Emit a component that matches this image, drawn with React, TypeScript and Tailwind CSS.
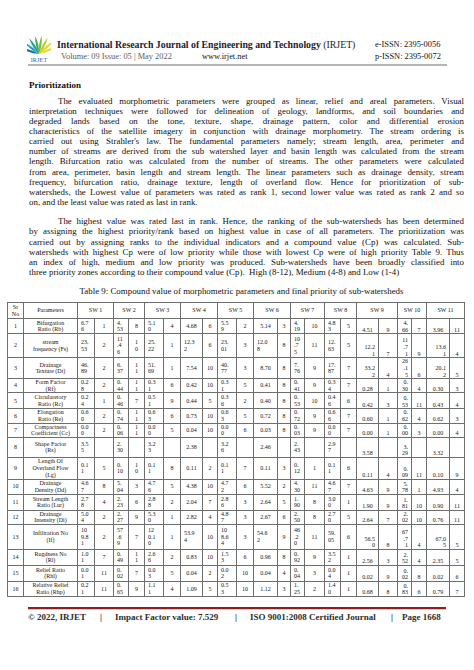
const para1 = [
  "The evaluated morphometric parameters were grouped as linear, relief and areal parameters. Visual",
  "interpretation techniques were followed for delineation of geology, landforms, and soil boundaries and",
  "degraded lands based on the tone, texture, shape, drainage pattern, color and differential erosion",
  "characteristics of the satellite imagery in conjunction with drainage morphometry. The stream ordering is",
  "carried out using Strahler's law. The fundamental parameters namely; stream length, area, perimeter and",
  "number of streams are derived from the sub watershed layer and basin length was calculated from the stream",
  "length. Bifurcation ratio was calculated from the number of streams. The other parameters were calculated",
  "from area, perimeter, basin length and stream length. The linear parameters such as drainage density, stream",
  "frequency, bifurcation ratio, drainage texture, length of overland flow. Hence for prioritization of sub-",
  "watersheds, the Lowest value of parameters was rated as rank 1, second lower value was rated as rank 2 and so",
  "on, and the least value was rated as last in rank.",
];

const para2 = [
  "The highest value was rated last in rank. Hence, the ranking of the sub-watersheds has been determined",
  "by assigning the highest priority/rank based on highest value in case of all parameters. The prioritization was",
  "carried out by assigning ranks to the individual indicators and a compound value (Cp) was calculated. Sub-",
  "watersheds with highest Cp were of low priority while those with lowest Cp were of high priority Table 9. Thus",
  "an index of high, medium and low priority was produced. Sub-watersheds have been broadly classified into",
  "three priority zones according to their compound value (Cp).\u00a0 High (8-12), Medium (4-8) and Low (1-4)",
];

const colWidths = [
  "w-[16px]", "w-[54px]",
  "w-[17px]", "w-[19px]",
  "w-[15px]", "w-[16px]",
  "w-[19px]", "w-[17px]",
  "w-[22px]", "w-[15px]",
  "w-[19px]", "w-[17px]",
  "w-[24px]", "w-[13px]",
  "w-[14px]", "w-[20px]",
  "w-[16px]", "w-[16px]",
  "w-[22px]", "w-[19px]",
  "w-[14px]", "w-[15px]",
  "w-[23px]", "w-[15px]",
];

const rowHeights = [
  "h-[15px]", "h-[24px]", "h-[21px]", "h-[13px]", "h-[16px]", "h-[13px]", "h-[14px]", "h-[20px]",
  "h-[22px]", "h-[15px]", "h-[16px]", "h-[14px]", "h-[25px]", "h-[16px]", "h-[16px]", "h-[15px]",
];

const rows: string[][] = [
  ["1", "Bifurgation\nRatio (Rb)", "6.7\n6", "1", "4.\n53", "8", "5.1\n0", "4", "4.68", "6", "5.5\n9", "2", "5.14", "3", "4.\n19", "10", "4.8\n3", "5", "4.51", "9", "4.\n66", "7", "3.96", "11"],
  ["2", "stream\nfrequency (Fs)", "23.\n53", "2", "11\n.4\n6", "1\n0", "25.\n22", "1", "12.3\n2", "6", "23.\n01", "3", "12.0\n8", "8", "10\n.7\n5", "11", "12.\n63", "5", "12.2\n1", "7", "11\n.7\n1", "9", "13.6\n1", "4"],
  ["3", "Drainage\nTexture (Dt)", "46.\n89", "2", "6.\n37", "1\n1", "51.\n69", "1", "7.54", "10", "40.\n77", "3", "8.70", "8", "7.\n76", "9", "17.\n87", "7", "33.2\n2", "4", "26\n.1\n5", "6", "20.1\n2", "5"],
  ["4", "Form Factor\n(Rf)", "0.2\n8", "2", "0.\n44", "1\n1", "0.3\n1", "6", "0.42", "10", "0.3\n1", "5", "0.41", "8", "0.\n41", "9", "0.3\n4", "7", "0.28", "1", "0.\n30", "4", "0.30", "3"],
  ["5", "Circularetory\nRatio (Rc)", "0.2\n4", "1", "0.\n46", "7", "0.5\n1", "9", "0.44", "5", "0.3\n6", "2", "0.40", "8", "0.\n53", "10", "0.4\n6", "6", "0.42", "3", "0.\n53", "11", "0.43", "4"],
  ["6", "Elongation\nRatio (Re)", "0.6\n0", "2", "0.\n74", "1\n1", "0.6\n3", "6", "0.73", "10", "0.6\n3", "5", "0.72", "8", "0.\n72", "9", "0.6\n6", "7", "0.60", "1", "0.\n62", "4", "0.62", "3"],
  ["7", "Compactness\nCoefficient (Cc)", "0.0\n0", "2", "0.\n06", "1\n1", "0.0\n0", "5", "0.04", "10", "0.0\n0", "6", "0.03", "8", "0.\n03", "9", "0.0\n0", "7", "0.00", "1", "0.\n00", "3", "0.00", "4"],
  ["8", "Shape Factor\n(Rs)", "3.5\n5", "", "2.\n30", "", "3.2\n3", "", "2.38", "", "3.2\n6", "", "2.46", "", "2.\n43", "", "2.9\n7", "", "3.58", "", "3.\n29", "", "3.32", ""],
  ["9", "Length Of\nOverland Flow\n(Lg)", "0.1\n1", "5", "0.\n10", "1\n0", "0.1\n1", "8", "0.11", "2", "0.1\n1", "7", "0.11", "3", "0.\n12", "1", "0.1\n1", "6", "0.11", "4", "0.\n09", "11", "0.10", "9"],
  ["10", "Drainage\nDensity (Dd)", "4.6\n7", "8", "5.\n04", "3", "4.7\n6", "5", "4.38", "10", "4.7\n2", "6", "5.52", "2", "4.\n30", "11", "4.6\n7", "7", "4.63", "9", "5.\n78", "1", "4.93", "4"],
  ["11", "Stream Length\nRatio (Lur)", "2.7\n8", "4", "2.\n23", "6", "2.8\n8", "2", "2.04", "7", "2.8\n6", "3", "2.64", "5", "1.\n90", "8", "3.0\n0", "1", "1.90", "9", "1.\n81", "10", "0.90", "11"],
  ["12", "Drainage\nIntensity (Di)", "5.0\n4", "2", "2.\n27", "9", "5.3\n0", "1", "2.82", "4", "4.8\n7", "3", "2.67", "6", "2.\n50", "8", "2.7\n0", "5", "2.64", "7", "2.\n02", "10", "0.76", "11"],
  ["13", "Infiltration No\n(If)", "10\n9.8\n1", "2", "57\n.6\n9", "7", "12\n0.1\n0", "1", "53.9\n4", "10", "10\n8.6\n4", "3", "54.6\n2", "9", "46\n.2\n0", "11", "59.\n05", "6", "56.5\n0", "8", "67\n.7\n1", "4", "67.0\n5", "5"],
  ["14", "Rugdness No\n(Rl)", "1.0\n1", "7", "0.\n49", "1\n1", "2.6\n6", "2", "0.83", "10", "1.5\n3", "6", "0.96", "8", "0.\n92", "9", "3.5\n2", "1", "2.56", "3", "2.\n52", "4", "2.35", "5"],
  ["15", "Relief Ratio\n(Rhl)", "0.0\n1", "11", "0.\n02", "7", "0.0\n3", "5", "0.04", "2", "0.0\n2", "10", "0.04", "4", "0.\n04", "3", "0.0\n4", "1", "0.02", "9", "0.\n02", "8", "0.02", "6"],
  ["16", "Relative Relief\nRatio (Rhp)", "0.2\n1", "11", "0.\n65", "9", "1.1\n1", "4", "1.09", "5", "0.5\n3", "10", "1.12", "3", "1.\n25", "2", "1.4\n0", "1", "0.68", "8", "0.\n83", "6", "0.79", "7"],
];

function Logo() {
  const leaves = [
    { a: -72, c: "#1d6fb8" },
    { a: -52, c: "#2196c9" },
    { a: -32, c: "#1aa39a" },
    { a: -12, c: "#3fae49" },
    { a: 8, c: "#7dbf3a" },
    { a: 28, c: "#b3cf2e" },
    { a: 48, c: "#d9dc2a" },
    { a: 68, c: "#f0d83a" },
  ];
  return (
    <svg width="24" height="31" viewBox="0 0 24 31" className="shrink-0">
      {leaves.map((l) => (
        <path
          key={l.a}
          d="M12 22 Q9.6 13 12 3.5 Q14.4 13 12 22 Z"
          fill={l.c}
          transform={`rotate(${l.a} 12 22)`}
        />
      ))}
      <text
        x="12"
        y="29.5"
        textAnchor="middle"
        fontSize="6"
        fontFamily="Liberation Serif, serif"
        fill="#2a62a8"
        letterSpacing="0.2"
      >
        IRJET
      </text>
    </svg>
  );
}

function Paragraph({ lines }: { lines: string[] }) {
  return (
    <div className="leading-[10.15px] text-[8.9px]">
      {lines.map((line, i) => {
        const last = i === lines.length - 1;
        return (
          <div
            key={i}
            className={
              (i === 0 ? "pl-[29px] " : "") +
              (last ? "text-left" : "text-justify [text-align-last:justify]")
            }
          >
            {line}
          </div>
        );
      })}
    </div>
  );
}

function cellClass(i: number, multi: boolean) {
  if (i < 2) return "text-center align-middle";
  const sw = Math.floor((i - 2) / 2);
  const isValue = (i - 2) % 2 === 0;
  if (sw >= 8) {
    if (isValue && multi) return "text-right pr-[3px] align-bottom";
    return "text-center align-bottom";
  }
  if (isValue && multi) return "text-left pl-[3px] align-middle";
  return "text-center align-middle";
}

function DataTable() {
  return (
    <table className="ml-[7px] w-[457px] table-fixed border-collapse text-[6px] leading-[6.6px] text-[#161616]">
      <colgroup>
        {colWidths.map((w, i) => (
          <col key={i} className={w} />
        ))}
      </colgroup>
      <thead>
        <tr className="h-[16px]">
          <th className="border border-[#6e6e6e] font-normal whitespace-pre">{"Sr\nNo"}</th>
          <th className="border border-[#6e6e6e] font-normal">Parameters</th>
          {Array.from({ length: 11 }, (_, k) => (
            <th key={k} colSpan={2} className="border border-[#6e6e6e] font-normal">
              SW {k + 1}
            </th>
          ))}
        </tr>
      </thead>
      <tbody>
        {rows.map((row, r) => (
          <tr key={r} className={rowHeights[r]}>
            {row.map((cell, i) => (
              <td
                key={i}
                className={`border border-[#6e6e6e] whitespace-pre p-0 ${cellClass(i, cell.includes("\n"))}`}
              >
                {cell}
              </td>
            ))}
          </tr>
        ))}
      </tbody>
    </table>
  );
}

export default function App() {
  return (
    <div className="relative h-[670px] w-[474px] overflow-hidden bg-white font-['Liberation_Serif',serif] text-[#111]">
      <header className="flex items-start gap-[6px] pl-[27px] pt-[32px]">
        <Logo />
        <div className="flex flex-col pt-[7px]">
          <div className="flex h-[12px] items-center">
            <span className="w-[318px] text-[9.8px] text-[#23232f]">
              <b>International Research Journal of Engineering and Technology</b> (IRJET)
            </span>
            <span className="text-[8.4px]">e-ISSN: 2395-0056</span>
          </div>
          <div className="flex h-[12px] items-center pl-[4px] text-[8.4px]">
            <span className="w-[141px] text-[#5e5e5e]">Volume: 09 Issue: 05 | May 2022</span>
            <span className="w-[173px]">www.irjet.net</span>
            <span>p-ISSN: 2395-0072</span>
          </div>
        </div>
      </header>
      <div className="ml-[28px] mt-[1px] h-[1.5px] w-[419px] bg-[#b5b5b5]" />

      <main className="pl-[29px] pr-[10px]">
        <h2 className="mt-[13px] h-[12px] text-[9px] font-bold leading-[12px]">Prioritization</h2>
        <div className="mt-[5px]">
          <Paragraph lines={para1} />
        </div>
        <div className="mt-[9px]">
          <Paragraph lines={para2} />
        </div>
        <p className="mt-[9px] pr-[10px] text-center text-[8.9px] leading-[11px]">
          Table 9: Compound value of morphometric parameters and final priority of sub-watersheds
        </p>
      </main>

      <div className="mt-[5px]">
        <DataTable />
      </div>

      <footer className="ml-[28px] mt-[10px] w-[418px]">
        <div className="h-[2px] bg-[#8a1f1f]" />
        <div className="h-[1px] bg-[#c9c9c9]" />
        <div className="mt-[2px] flex items-center text-[9px] font-bold leading-[11px] text-[#2e2e2e]">
          <span className="w-[72px]">© 2022, IRJET</span>
          <span className="w-[15px]">|</span>
          <span className="w-[120px]">Impact Factor value: 7.529</span>
          <span className="w-[15px]">|</span>
          <span className="w-[141px]">ISO 9001:2008 Certified Journal</span>
          <span className="w-[11px]">|</span>
          <span>Page 1668</span>
        </div>
      </footer>
    </div>
  );
}
